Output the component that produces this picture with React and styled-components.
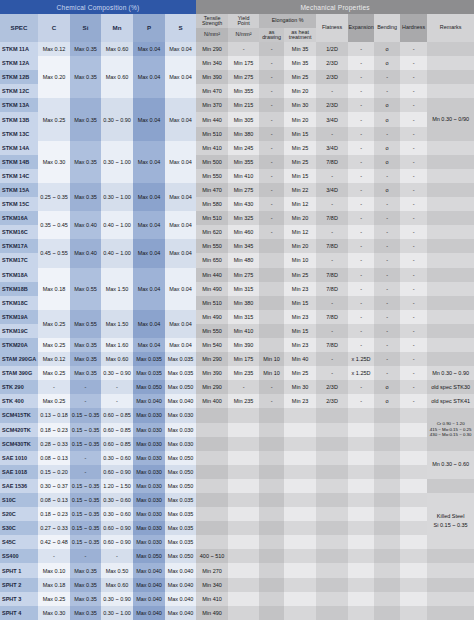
import styled, { createGlobalStyle } from 'styled-components';

const GlobalStyle = createGlobalStyle`
  html, body {
    margin: 0;
    padding: 0;
    background: #ffffff;
  }
  body {
    font-family: "Liberation Sans", Arial, sans-serif;
  }
`;

// column widths, left to right
const widths = [38, 32, 31, 32, 32, 31, 32, 31, 25, 32, 32, 26, 26, 27, 47];

const chemShades = {
  spec: { L: '#c8d5ea', M: '#abbfdd' },
  cols: [
    { L: '#f0f3f9', D: '#dbe3f0' },
    { L: '#aec0de', D: '#9cb1d5' },
    { L: '#e9eef6', D: '#d5deec' },
    { L: '#9eb3d7', D: '#8ba3cd' },
    { L: '#e9eef6', D: '#d5deec' },
  ],
};

const mechShades = [
  ['#d3d3d5', '#c3c3c5'],
  ['#e7e7e9', '#d4d4d6'],
  ['#d1d1d3', '#c3c3c5'],
  ['#e9e9eb', '#d7d7d9'],
  ['#d7d7d9', '#c8c8ca'],
  ['#e9e9eb', '#d7d7d9'],
  ['#d5d5d7', '#c7c7c9'],
  ['#e9e9eb', '#d7d7d9'],
];
const remarkShade = ['#d8d8da', '#c9c9cb'];

const chemGroups = [
  { specs: ['STKM 11A'], v: ['Max 0.12', 'Max 0.35', 'Max 0.60', 'Max 0.04', 'Max 0.04'] },
  { specs: ['STKM 12A', 'STKM 12B', 'STKM 12C'], v: ['Max 0.20', 'Max 0.35', 'Max 0.60', 'Max 0.04', 'Max 0.04'] },
  { specs: ['STKM 13A', 'STKM 13B', 'STKM 13C'], v: ['Max 0.25', 'Max 0.35', '0.30 ~ 0.90', 'Max 0.04', 'Max 0.04'] },
  { specs: ['STKM 14A', 'STKM 14B', 'STKM 14C'], v: ['Max 0.30', 'Max 0.35', '0.30 ~ 1.00', 'Max 0.04', 'Max 0.04'] },
  { specs: ['STKM 15A', 'STKM 15C'], v: ['0.25 ~ 0.35', 'Max 0.35', '0.30 ~ 1.00', 'Max 0.04', 'Max 0.04'] },
  { specs: ['STKM16A', 'STKM16C'], v: ['0.35 ~ 0.45', 'Max 0.40', '0.40 ~ 1.00', 'Max 0.04', 'Max 0.04'] },
  { specs: ['STKM17A', 'STKM17C'], v: ['0.45 ~ 0.55', 'Max 0.40', '0.40 ~ 1.00', 'Max 0.04', 'Max 0.04'] },
  { specs: ['STKM18A', 'STKM18B', 'STKM18C'], v: ['Max 0.18', 'Max 0.55', 'Max 1.50', 'Max 0.04', 'Max 0.04'] },
  { specs: ['STKM19A', 'STKM19C'], v: ['Max 0.25', 'Max 0.55', 'Max 1.50', 'Max 0.04', 'Max 0.04'] },
  { specs: ['STKM20A'], v: ['Max 0.25', 'Max 0.35', 'Max 1.60', 'Max 0.04', 'Max 0.04'] },
  { specs: ['STAM 290GA'], v: ['Max 0.12', 'Max 0.35', 'Max 0.60', 'Max 0.035', 'Max 0.035'] },
  { specs: ['STAM 390G'], v: ['Max 0.25', 'Max 0.35', '0.30 ~ 0.90', 'Max 0.035', 'Max 0.035'] },
  { specs: ['STK 290'], v: ['-', '-', '-', 'Max 0.050', 'Max 0.050'] },
  { specs: ['STK 400'], v: ['Max 0.25', '-', '-', 'Max 0.040', 'Max 0.040'] },
  { specs: ['SCM415TK'], v: ['0.13 ~ 0.18', '0.15 ~ 0.35', '0.60 ~ 0.85', 'Max 0.030', 'Max 0.030'] },
  { specs: ['SCM420TK'], v: ['0.18 ~ 0.23', '0.15 ~ 0.35', '0.60 ~ 0.85', 'Max 0.030', 'Max 0.030'] },
  { specs: ['SCM430TK'], v: ['0.28 ~ 0.33', '0.15 ~ 0.35', '0.60 ~ 0.85', 'Max 0.030', 'Max 0.030'] },
  { specs: ['SAE 1010'], v: ['0.08 ~ 0.13', '-', '0.30 ~ 0.60', 'Max 0.030', 'Max 0.050'] },
  { specs: ['SAE 1018'], v: ['0.15 ~ 0.20', '-', '0.60 ~ 0.90', 'Max 0.030', 'Max 0.050'] },
  { specs: ['SAE 1536'], v: ['0.30 ~ 0.37', '0.15 ~ 0.35', '1.20 ~ 1.50', 'Max 0.030', 'Max 0.050'] },
  { specs: ['S10C'], v: ['0.08 ~ 0.13', '0.15 ~ 0.35', '0.30 ~ 0.60', 'Max 0.030', 'Max 0.035'] },
  { specs: ['S20C'], v: ['0.18 ~ 0.23', '0.15 ~ 0.35', '0.30 ~ 0.60', 'Max 0.030', 'Max 0.035'] },
  { specs: ['S30C'], v: ['0.27 ~ 0.33', '0.15 ~ 0.35', '0.60 ~ 0.90', 'Max 0.030', 'Max 0.035'] },
  { specs: ['S45C'], v: ['0.42 ~ 0.48', '0.15 ~ 0.35', '0.60 ~ 0.90', 'Max 0.030', 'Max 0.035'] },
  { specs: ['SS400'], v: ['-', '-', '-', 'Max 0.050', 'Max 0.050'] },
  { specs: ['SPHT 1'], v: ['Max 0.10', 'Max 0.35', 'Max 0.50', 'Max 0.040', 'Max 0.040'] },
  { specs: ['SPHT 2'], v: ['Max 0.18', 'Max 0.35', 'Max 0.60', 'Max 0.040', 'Max 0.040'] },
  { specs: ['SPHT 3'], v: ['Max 0.25', 'Max 0.35', '0.30 ~ 0.90', 'Max 0.040', 'Max 0.040'] },
  { specs: ['SPHT 4'], v: ['Max 0.30', 'Max 0.35', '0.30 ~ 1.00', 'Max 0.040', 'Max 0.040'] },
];

// spec column shade, one letter per row
const specTone = 'LLMLMLLLMLMLMLMLLMLMLMMLMLMLMLMLMLMLMLMLM';

const mech = [
  'Min 290|-|-|Min 35|1/2D|-|o|-',
  'Min 340|Min 175|-|Min 35|2/3D|-|o|-',
  'Min 390|Min 275|-|Min 25|2/3D|-|-|-',
  'Min 470|Min 355|-|Min 20|-|-|-|-',
  'Min 370|Min 215|-|Min 30|2/3D|-|o|-',
  'Min 440|Min 305|-|Min 20|3/4D|-|o|-',
  'Min 510|Min 380|-|Min 15|-|-|-|-',
  'Min 410|Min 245|-|Min 25|3/4D|-|o|-',
  'Min 500|Min 355|-|Min 25|7/8D|-|o|-',
  'Min 550|Min 410|-|Min 15|-|-|-|-',
  'Min 470|Min 275|-|Min 22|3/4D|-|o|-',
  'Min 580|Min 430|-|Min 12|-|-|-|-',
  'Min 510|Min 325|-|Min 20|7/8D|-|-|-',
  'Min 620|Min 460|-|Min 12|-|-|-|-',
  'Min 550|Min 345||Min 20|7/8D|-|-|-',
  'Min 650|Min 480||Min 10|-|-|-|-',
  'Min 440|Min 275||Min 25|7/8D|-|-|-',
  'Min 490|Min 315||Min 23|7/8D|-|-|-',
  'Min 510|Min 380||Min 15|-|-|-|-',
  'Min 490|Min 315||Min 23|7/8D|-|-|-',
  'Min 550|Min 410||Min 15|-|-|-|-',
  'Min 540|Min 390||Min 23|7/8D|-|-|-',
  'Min 290|Min 175|Min 10|Min 40|-|x 1.25D|-|-',
  'Min 390|Min 235|Min 10|Min 25|-|x 1.25D|-|-',
  'Min 290|-|-|Min 30|2/3D|-|o|-',
  'Min 400|Min 235|-|Min 23|2/3D|-|o|-',
  '|||||||', '|||||||', '|||||||', '|||||||', '|||||||',
  '|||||||', '|||||||', '|||||||', '|||||||', '|||||||',
  '400 ~ 510|||||||',
  'Min 270|||||||',
  'Min 340|||||||',
  'Min 410|||||||',
  'Min 490|||||||',
].map((r) => r.split('|'));

const remarks = {
  4: { span: 3, lines: ['Mn 0.30 ~ 0/90'], dark: true },
  23: { span: 1, lines: ['Mn 0.30 ~ 0.90'] },
  24: { span: 1, lines: ['old spec STK30'] },
  25: { span: 1, lines: ['old spec STK41'] },
  26: { span: 3, lines: ['Cr 0.90 ~ 1.20', '415 ~ Mo:0.15 ~ 0.25', '430 ~ Mo:0.15 ~ 0.30'], small: true, dark: true },
  29: { span: 2, lines: ['Mn 0.30 ~ 0.60'], dark: false },
  31: { span: 1, lines: [], dark: true },
  32: { span: 4, lines: ['Killed Steel', 'Si 0.15 ~ 0.35'], dark: false },
};

const Sheet = styled.table`
  width: 474px;
  table-layout: fixed;
  border-collapse: collapse;
  border-spacing: 0;
  font-family: "Liberation Sans", Arial, sans-serif;
  color: #141416;
`;

const Col = styled.col`
  width: ${(p) => p.$w}px;
`;

const TopRow = styled.tr`
  height: 14px;
`;

const BodyRow = styled.tr`
  height: 14.1px;
`;

const Title = styled.th`
  padding: 0;
  font-size: 6.6px;
  font-weight: normal;
  letter-spacing: 0.2px;
  text-align: center;
  vertical-align: middle;
  background: ${(p) => (p.$chem ? '#2e57a7' : '#8d8d8f')};
  color: ${(p) => (p.$chem ? '#c9d7f1' : '#ececee')};
`;

const HeadCell = styled.th`
  padding: 0;
  font-size: ${(p) => (p.$big ? '6.2px' : '5.4px')};
  font-weight: ${(p) => (p.$big ? 'bold' : 'normal')};
  line-height: 0.95;
  text-align: center;
  vertical-align: middle;
  background: ${(p) => p.$bg};
  color: ${(p) => (p.$chem ? '#1d2b48' : '#222224')};
  white-space: nowrap;
`;

const SpecCell = styled.td`
  padding: 0 0 0 2px;
  font-size: 5.5px;
  font-weight: bold;
  color: #1c2740;
  text-align: left;
  vertical-align: middle;
  white-space: nowrap;
  overflow: hidden;
  background: ${(p) => p.$bg};
`;

const ValueCell = styled.td`
  padding: 0;
  font-size: 5.5px;
  text-align: center;
  vertical-align: middle;
  white-space: nowrap;
  background: ${(p) => p.$bg};
`;

const RemarkCell = styled.td`
  padding: 0;
  font-size: ${(p) => (p.$small ? '4.4px' : '5.5px')};
  line-height: ${(p) => (p.$small ? 1.25 : 1.6)};
  text-align: center;
  vertical-align: middle;
  white-space: nowrap;
  background: ${(p) => p.$bg};
`;

const Line = styled.div``;

function buildRows() {
  const rows = [];
  let i = 0;
  chemGroups.forEach((g, gi) => {
    const band = gi % 2 === 0 ? 'D' : 'L';
    g.specs.forEach((spec, j) => {
      rows.push({ index: i, spec, group: j === 0 ? g : null, span: g.specs.length, band });
      i += 1;
    });
  });
  return rows;
}

const rows = buildRows();
const covered = new Set();
Object.entries(remarks).forEach(([start, r]) => {
  for (let k = 1; k < r.span; k += 1) covered.add(Number(start) + k);
});

export default function App() {
  return (
    <>
      <GlobalStyle />
      <Sheet>
        <colgroup>
          {widths.map((w, k) => (
            <Col key={k} $w={w} />
          ))}
        </colgroup>
        <thead>
          <TopRow>
            <Title $chem colSpan={6}>Chemical Composition (%)</Title>
            <Title colSpan={9}>Mechanical Properties</Title>
          </TopRow>
          <TopRow>
            <HeadCell rowSpan={2} $chem $big $bg="#b1c2dd">SPEC</HeadCell>
            <HeadCell rowSpan={2} $chem $big $bg="#c6d2e7">C</HeadCell>
            <HeadCell rowSpan={2} $chem $big $bg="#95abd0">Si</HeadCell>
            <HeadCell rowSpan={2} $chem $big $bg="#c8d4e8">Mn</HeadCell>
            <HeadCell rowSpan={2} $chem $big $bg="#95abd0">P</HeadCell>
            <HeadCell rowSpan={2} $chem $big $bg="#c8d4e8">S</HeadCell>
            <HeadCell $bg="#c6c6c8">Tensile<br />Strength</HeadCell>
            <HeadCell $bg="#cfcfd1">Yield<br />Point</HeadCell>
            <HeadCell colSpan={2} $bg="#b9b9bb">Elongation %</HeadCell>
            <HeadCell rowSpan={2} $bg="#d4d4d6">Flatness</HeadCell>
            <HeadCell rowSpan={2} $bg="#a9a9ab">Expansion</HeadCell>
            <HeadCell rowSpan={2} $bg="#d4d4d6">Bending</HeadCell>
            <HeadCell rowSpan={2} $bg="#a9a9ab">Hardness</HeadCell>
            <HeadCell rowSpan={2} $bg="#d3d3d5">Remarks</HeadCell>
          </TopRow>
          <TopRow>
            <HeadCell $bg="#b6b6b8">N/mm²</HeadCell>
            <HeadCell $bg="#c4c4c6">N/mm²</HeadCell>
            <HeadCell $bg="#c6c6c8">as<br />drawing</HeadCell>
            <HeadCell $bg="#cfcfd1">as heat<br />treatment</HeadCell>
          </TopRow>
        </thead>
        <tbody>
          {rows.map((row) => {
            const tone = row.index % 2 === 0 ? 1 : 0;
            const remark = remarks[row.index];
            return (
              <BodyRow key={row.spec}>
                <SpecCell $bg={chemShades.spec[specTone[row.index]]}>{row.spec}</SpecCell>
                {row.group &&
                  row.group.v.map((val, k) => (
                    <ValueCell key={k} rowSpan={row.span} $bg={chemShades.cols[k][row.band]}>
                      {val}
                    </ValueCell>
                  ))}
                {mech[row.index].map((val, k) => (
                  <ValueCell key={`m${k}`} $bg={mechShades[k][tone]}>
                    {val}
                  </ValueCell>
                ))}
                {!covered.has(row.index) && (
                  <RemarkCell
                    rowSpan={remark ? remark.span : 1}
                    $small={remark && remark.small}
                    $bg={
                      remark && remark.dark !== undefined
                        ? remarkShade[remark.dark ? 1 : 0]
                        : remarkShade[tone]
                    }
                  >
                    {remark && remark.lines.map((l) => <Line key={l}>{l}</Line>)}
                  </RemarkCell>
                )}
              </BodyRow>
            );
          })}
        </tbody>
      </Sheet>
    </>
  );
}
